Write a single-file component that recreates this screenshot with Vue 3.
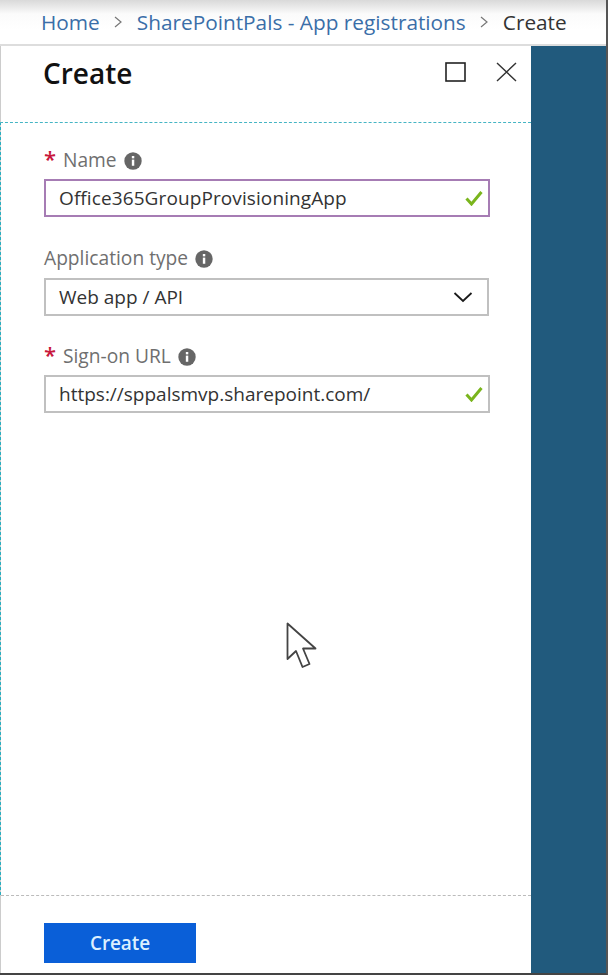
<script setup>
const fields = [
  { label: 'Name', required: true, value: 'Office365GroupProvisioningApp', kind: 'valid', focus: true },
  { label: 'Application type', required: false, value: 'Web app / API', kind: 'select', focus: false },
  { label: 'Sign-on URL', required: true, value: 'https://sppalsmvp.sharepoint.com/', kind: 'valid', focus: false }
]
</script>

<template>
  <div class="window">
    <nav class="crumbs">
      <a class="crumb">Home</a>
      <svg class="sep" width="10" height="14" viewBox="0 0 10 14"><path d="M2 2l6 5-6 5" fill="none" stroke="#777" stroke-width="1.2" /></svg>
      <a class="crumb">SharePointPals - App registrations</a>
      <svg class="sep" width="10" height="14" viewBox="0 0 10 14"><path d="M2 2l6 5-6 5" fill="none" stroke="#777" stroke-width="1.2" /></svg>
      <span class="current">Create</span>
    </nav>
    <div class="main">
      <section class="panel">
        <header class="head">
          <h1 class="title">Create</h1>
          <div class="controls">
            <svg width="21" height="20" viewBox="0 0 21 20"><rect x="1" y="1" width="19" height="18" fill="none" stroke="#222" stroke-width="1.6" /></svg>
            <svg width="21" height="20" viewBox="0 0 21 20"><path d="M1 1l19 18M20 1L1 19" fill="none" stroke="#333" stroke-width="1.4" /></svg>
          </div>
        </header>
        <form class="body" @submit.prevent>
          <div v-for="f in fields" :key="f.label" class="field">
            <div class="label">
              <span v-if="f.required" class="star">*</span>
              <span>{{ f.label }}</span>
              <svg class="info" width="18" height="18" viewBox="0 0 17 17">
                <circle cx="8.5" cy="8.5" r="8.2" fill="#666" />
                <rect x="7.4" y="7.2" width="2.3" height="5.8" fill="#fff" />
                <rect x="7.4" y="3.8" width="2.3" height="2.2" fill="#fff" />
              </svg>
            </div>
            <div class="input" :class="[{ focus: f.focus }, f.kind]">
              <span>{{ f.value }}</span>
              <svg v-if="f.kind === 'valid'" width="18" height="16" viewBox="0 0 18 16"><path d="M1.500 8.500l5 5.500L16.500 2" fill="none" stroke="#7ab51d" stroke-width="3" /></svg>
              <svg v-else width="20" height="12" viewBox="0 0 20 12"><path d="M1.500 2l8.500 8 8.500-8" fill="none" stroke="#1a1a1a" stroke-width="1.800" /></svg>
            </div>
          </div>
        </form>
        <footer class="foot">
          <button class="btn" type="button">Create</button>
        </footer>
        <svg class="cursor" width="32" height="50" viewBox="0 0 32 50">
          <path d="M1.500 1.500V37l8.500-8 6.500 16 7-3-6.500-15.500H29.500z" fill="#fff" stroke="#444" stroke-width="1.800" stroke-linejoin="round" />
        </svg>
      </section>
      <aside class="side"></aside>
    </div>
  </div>
</template>

<style>
body { background: #fff; }
</style>

<style scoped>
.window {
  width: 608px;
  height: 975px;
  box-sizing: border-box;
  display: flex;
  flex-direction: column;
  background: #fff;
  border-right: 2px solid #555;
  border-bottom: 2px solid #444;
  font-family: "Open Sans", "Noto Sans", sans-serif;
  overflow: hidden;
}
.crumbs {
  height: 46px;
  box-sizing: border-box;
  flex: none;
  display: flex;
  align-items: center;
  padding-left: 41px;
  font-size: 20.800px;
  background: linear-gradient(#d9d9d9, #fbfbfb 14px, #fff 30px);
  border-bottom: 2px solid #ddd;
}
.crumb { color: #3a6ea8; }
.current { color: #333; }
.sep { margin: 0 13.500px; }
.main {
  flex: 1;
  display: flex;
  min-height: 0;
}
.panel {
  position: relative;
  width: 531px;
  flex: none;
  box-sizing: border-box;
  display: flex;
  flex-direction: column;
  border-left: 1px solid #ccc;
}
.head {
  height: 76px;
  flex: none;
  box-sizing: border-box;
  display: flex;
  justify-content: space-between;
  align-items: flex-start;
  padding: 8px 14px 0 42px;
}
.title {
  margin: 0;
  font-size: 28px;
  line-height: 38px;
  font-weight: 600;
  color: #111;
}
.controls {
  display: flex;
  gap: 30px;
  padding-top: 8px;
}
.body {
  flex: 1;
  display: flex;
  flex-direction: column;
  gap: 28px;
  padding: 24px 41px 0 43px;
  border-top: 1px dashed #45b5c4;
  border-left: 1px dashed #28aec0;
  margin-left: -1px;
}
.field {
  display: flex;
  flex-direction: column;
  gap: 7px;
}
.label {
  height: 25px;
  display: flex;
  align-items: center;
  gap: 7px;
  font-size: 19.200px;
  color: #6f6f6f;
}
.star {
  width: 12px;
  color: #c8173c;
  font-size: 22px;
  line-height: 22px;
  height: 25px;
  font-weight: 600;
}
.info {
  flex: none;
  margin-top: 2px;
}
.input {
  height: 38px;
  box-sizing: border-box;
  display: flex;
  align-items: center;
  justify-content: space-between;
  padding: 0 5px 0 13px;
  border: 2px solid #c0c0c0;
  font-size: 19px;
  color: #333;
}
.input.select {
  padding-right: 14px;
  margin-right: 1px;
  margin-top: 1px;
  margin-bottom: -1px;
}
.input.focus {
  border-color: #a67cb4;
  letter-spacing: 0.1px;
}
.foot {
  height: 78px;
  flex: none;
  box-sizing: border-box;
  border-top: 1px dashed #bbb;
  padding: 27px 0 0 43px;
}
.btn {
  display: block;
  width: 152px;
  height: 40px;
  border: 0;
  padding: 0;
  background: #0a5fd8;
  color: #dcefff;
  font-family: inherit;
  font-size: 19px;
  font-weight: 600;
  letter-spacing: -0.1px;
}
.cursor {
  position: absolute;
  left: 285px;
  top: 576px;
}
.side {
  flex: 1;
  background: #215a7d;
}
</style>
